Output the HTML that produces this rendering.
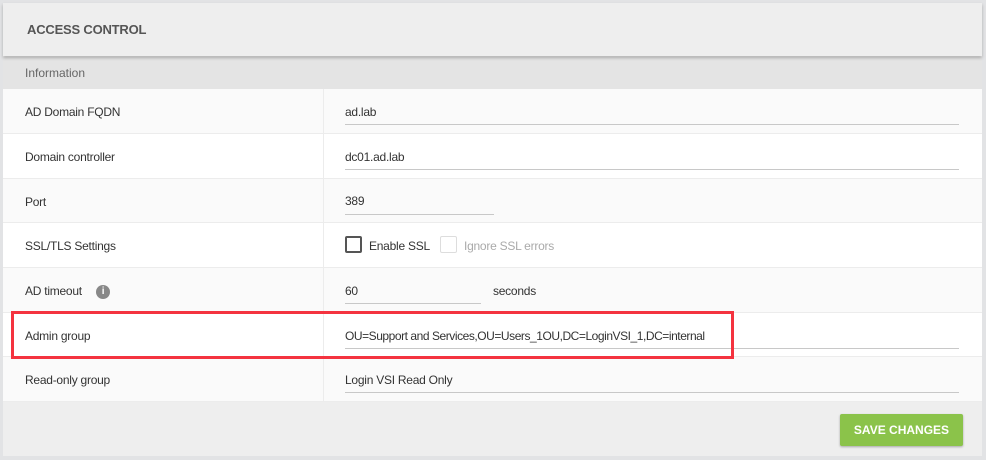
<!DOCTYPE html>
<html><head><style>
*{margin:0;padding:0;box-sizing:border-box}
body{width:986px;height:460px;background:#e2e3e5;font-family:"Liberation Sans",sans-serif;position:relative;overflow:hidden;color:#333}
.panel{position:absolute;left:3px;top:3px;width:979px;height:453px;background:#eeeeee}
.hdr{position:absolute;left:0;top:0;width:979px;height:53px;background:#eeeeee;box-shadow:0 2px 3px rgba(0,0,0,.25);z-index:2}
.hdr span{position:absolute;left:24px;top:19px;font-size:13px;font-weight:bold;color:#555;letter-spacing:-0.2px}
.info{position:absolute;left:0;top:54px;width:979px;height:32px;background:#e4e4e4;font-size:12px;color:#666;padding:9px 0 0 22px}
.row{position:absolute;left:0;width:979px;height:45px;border-bottom:1px solid #ececec;font-size:12px;color:#333;letter-spacing:-0.25px}
.row .l{position:absolute;left:22px;top:16px}
.row .div{position:absolute;left:320px;top:0;width:1px;height:100%;background:#ececec}
.row .v{position:absolute;left:342px;top:16px}
.row .u{position:absolute;left:342px;top:35px;height:1px;background:#c8c8c8;width:614px}
.btn{position:absolute;left:840px;top:414px;width:123px;height:32px;background:#8bc34a;border-radius:2px;color:#fff;font-weight:bold;font-size:12px;text-align:center;line-height:33px;box-shadow:0 1px 2px rgba(0,0,0,.3)}
.cb{position:absolute;width:17px;height:17px;border-radius:2px}
.red{position:absolute;left:11px;top:311px;width:723px;height:48px;border:3px solid #f4333f;z-index:3}
</style></head><body>
<div class="panel">
<div class="hdr"><span>ACCESS CONTROL</span></div>
<div class="info">Information</div>
<div class="row" style="top:86px;background:#fafafa"><span class="l">AD Domain FQDN</span><div class="div"></div><span class="v">ad.lab</span><div class="u"></div></div>
<div class="row" style="top:131px;background:#fff"><span class="l">Domain controller</span><div class="div"></div><span class="v">dc01.ad.lab</span><div class="u"></div></div>
<div class="row" style="top:176px;background:#fafafa;height:44px"><span class="l">Port</span><div class="div"></div><span class="v" style="top:15px">389</span><div class="u" style="width:149px"></div></div>
<div class="row" style="top:220px;background:#fff"><span class="l">SSL/TLS Settings</span><div class="div"></div>
<div class="cb" style="left:342px;top:13px;border:2px solid #555"></div><span style="position:absolute;left:366px;top:16px">Enable SSL</span>
<div class="cb" style="left:437px;top:13px;border:1px solid #ddd"></div><span style="position:absolute;left:461px;top:16px;color:#aaa">Ignore SSL errors</span></div>
<div class="row" style="top:265px;background:#fafafa"><span class="l">AD timeout</span>
<span style="position:absolute;left:93px;top:17px;width:14px;height:14px;border-radius:50%;background:#888;color:#fff;font-size:10px;font-weight:bold;text-align:center;line-height:14px">i</span>
<div class="div"></div><span class="v">60</span><div class="u" style="width:136px"></div><span style="position:absolute;left:490px;top:16px">seconds</span></div>
<div class="row" style="top:310px;background:#fff;height:44px"><span class="l">Admin group</span><div class="div"></div><span class="v" style="letter-spacing:-0.45px">OU=Support and Services,OU=Users_1OU,DC=LoginVSI_1,DC=internal</span><div class="u"></div></div>
<div class="row" style="top:354px;background:#fafafa"><span class="l">Read-only group</span><div class="div"></div><span class="v">Login VSI Read Only</span><div class="u"></div></div>
</div>
<div class="red"></div>
<div class="btn">SAVE CHANGES</div>
</body></html>
